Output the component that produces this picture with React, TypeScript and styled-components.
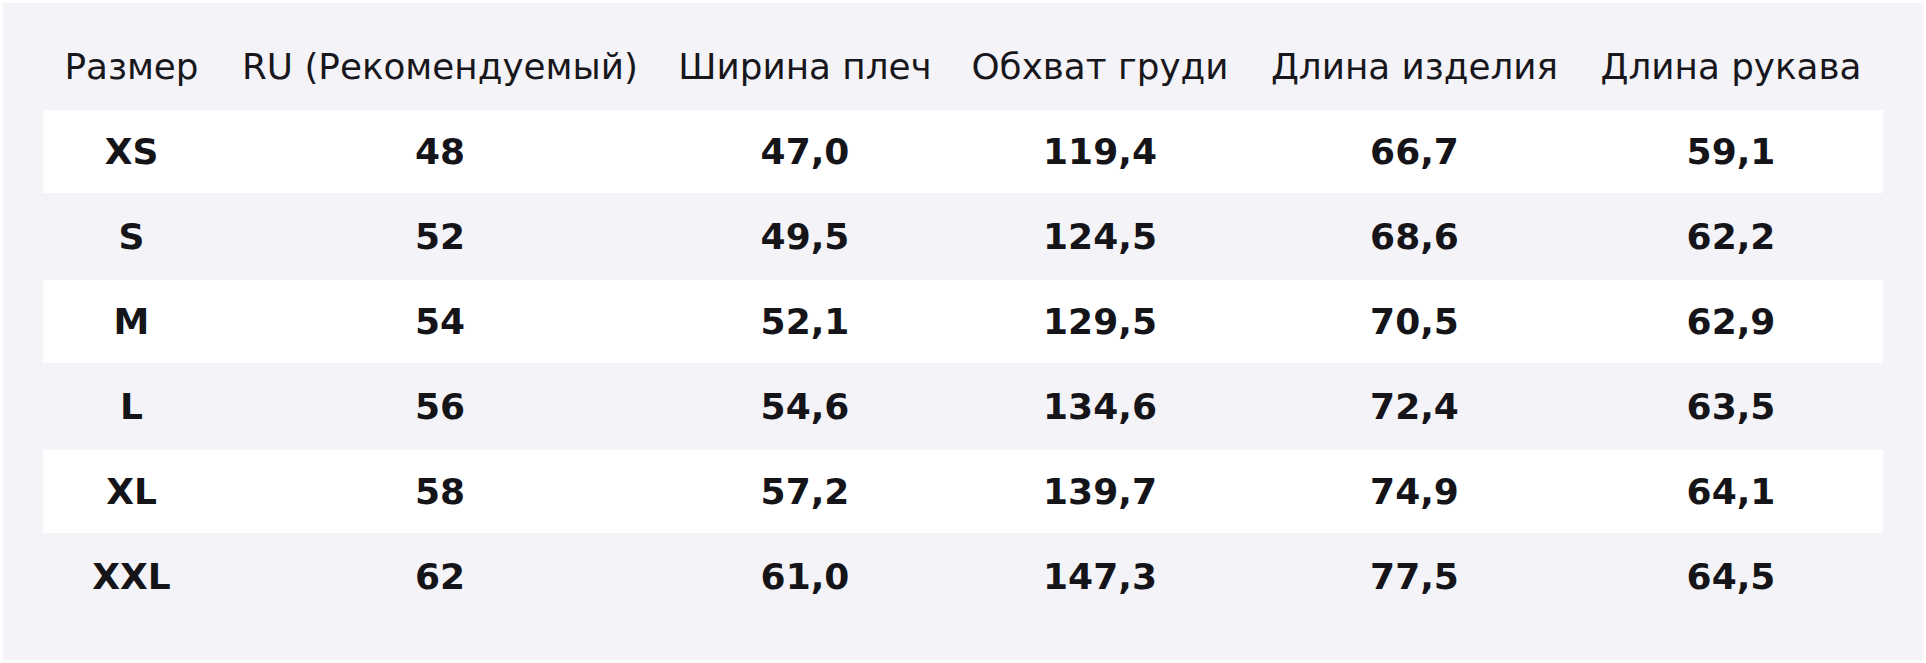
import styled, { createGlobalStyle } from 'styled-components'

// ── Global ────────────────────────────────────────────────
const GlobalStyle = createGlobalStyle`
  html, body {
    margin: 0;
    padding: 0;
    background: #ffffff;
  }
  body {
    padding: 3px;
    font-family: "DejaVu Sans", "Noto Sans", sans-serif;
    color: #141419;
  }
`

// ── Styled ────────────────────────────────────────────────
const Panel = styled.section`
  width: 1920px;
  box-sizing: border-box;
  padding: 40px;
  background: #f4f3f8;
`

const SizeTable = styled.table`
  width: 100%;
  table-layout: fixed;
  border-collapse: collapse;
  border-spacing: 0;
`

const HeadCell = styled.th`
  padding: 3px 0 22px;
  font-size: 35.75px;
  line-height: 42px;
  font-weight: 400;
  text-align: center;
  white-space: nowrap;
  color: #17171c;
`

const Row = styled.tr<{ $white: boolean }>`
  background: ${(p) => (p.$white ? '#ffffff' : 'transparent')};
  height: ${(p) => (p.$white ? '83px' : '87px')};
`

const Cell = styled.td`
  padding: 0;
  font-size: 36px;
  line-height: 42px;
  font-weight: 700;
  text-align: center;
  vertical-align: middle;
  color: #141419;
`

// ── Data ──────────────────────────────────────────────────
const columns = [
  { title: 'Размер', width: 177 },
  { title: 'RU (Рекомендуемый)', width: 440 },
  { title: 'Ширина плеч', width: 290 },
  { title: 'Обхват груди', width: 300 },
  { title: 'Длина изделия', width: 329 },
  { title: 'Длина рукава', width: 304 },
]

const rows = [
  ['XS', '48', '47,0', '119,4', '66,7', '59,1'],
  ['S', '52', '49,5', '124,5', '68,6', '62,2'],
  ['M', '54', '52,1', '129,5', '70,5', '62,9'],
  ['L', '56', '54,6', '134,6', '72,4', '63,5'],
  ['XL', '58', '57,2', '139,7', '74,9', '64,1'],
  ['XXL', '62', '61,0', '147,3', '77,5', '64,5'],
]

// ── Component ─────────────────────────────────────────────
export default function App() {
  return (
    <>
      <GlobalStyle />
      <Panel>
        <SizeTable>
          <colgroup>
            {columns.map((c) => (
              <col key={c.title} style={{ width: c.width }} />
            ))}
          </colgroup>
          <thead>
            <tr>
              {columns.map((c) => (
                <HeadCell key={c.title}>{c.title}</HeadCell>
              ))}
            </tr>
          </thead>
          <tbody>
            {rows.map((r, i) => (
              <Row key={r[0]} $white={i % 2 === 0}>
                {r.map((v, j) => (
                  <Cell key={j}>{v}</Cell>
                ))}
              </Row>
            ))}
          </tbody>
        </SizeTable>
      </Panel>
    </>
  )
}
